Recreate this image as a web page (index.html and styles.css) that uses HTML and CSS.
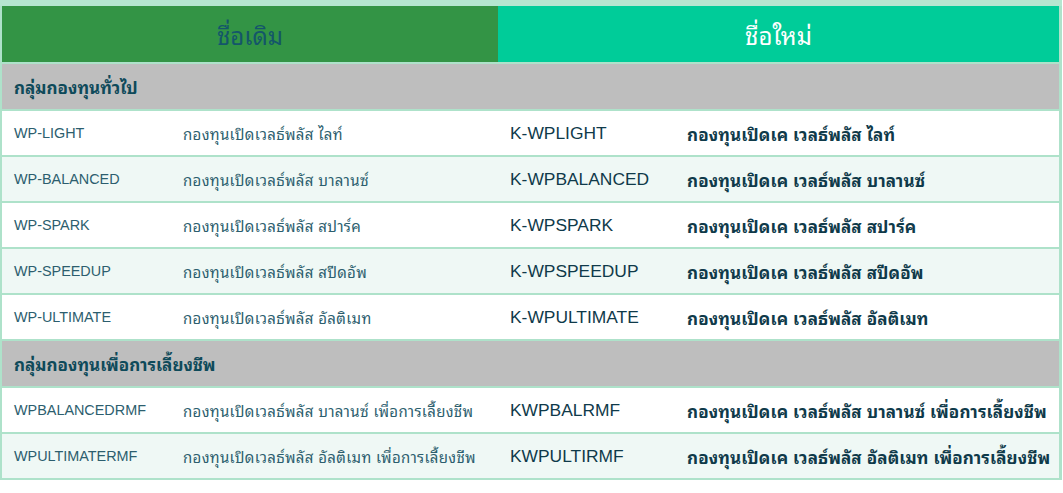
FILE: index.html
```html
<!DOCTYPE html>
<html lang="th">
<head>
<meta charset="utf-8">
<link rel="stylesheet" href="styles.css">
</head>
<body>
<div class="wrap">
<table class="funds">
  <colgroup>
    <col class="c1"><col class="c2"><col class="c3"><col class="c4">
  </colgroup>
  <thead>
    <tr>
      <th colspan="2" class="h-old">ชื่อเดิม</th>
      <th colspan="2" class="h-new">ชื่อใหม่</th>
    </tr>
  </thead>
  <tbody>
    <tr class="group"><td colspan="4">กลุ่มกองทุนทั่วไป</td></tr>
    <tr class="odd"><td class="oc">WP-LIGHT</td><td class="on">กองทุนเปิดเวลธ์พลัส ไลท์</td><td class="nc">K-WPLIGHT</td><td class="nn">กองทุนเปิดเค เวลธ์พลัส ไลท์</td></tr>
    <tr class="even"><td class="oc">WP-BALANCED</td><td class="on">กองทุนเปิดเวลธ์พลัส บาลานซ์</td><td class="nc">K-WPBALANCED</td><td class="nn">กองทุนเปิดเค เวลธ์พลัส บาลานซ์</td></tr>
    <tr class="odd"><td class="oc">WP-SPARK</td><td class="on">กองทุนเปิดเวลธ์พลัส สปาร์ค</td><td class="nc">K-WPSPARK</td><td class="nn">กองทุนเปิดเค เวลธ์พลัส สปาร์ค</td></tr>
    <tr class="even"><td class="oc">WP-SPEEDUP</td><td class="on">กองทุนเปิดเวลธ์พลัส สปีดอัพ</td><td class="nc">K-WPSPEEDUP</td><td class="nn">กองทุนเปิดเค เวลธ์พลัส สปีดอัพ</td></tr>
    <tr class="odd"><td class="oc">WP-ULTIMATE</td><td class="on">กองทุนเปิดเวลธ์พลัส อัลติเมท</td><td class="nc">K-WPULTIMATE</td><td class="nn">กองทุนเปิดเค เวลธ์พลัส อัลติเมท</td></tr>
    <tr class="group"><td colspan="4">กลุ่มกองทุนเพื่อการเลี้ยงชีพ</td></tr>
    <tr class="odd"><td class="oc">WPBALANCEDRMF</td><td class="on">กองทุนเปิดเวลธ์พลัส บาลานซ์ เพื่อการเลี้ยงชีพ</td><td class="nc">KWPBALRMF</td><td class="nn">กองทุนเปิดเค เวลธ์พลัส บาลานซ์ เพื่อการเลี้ยงชีพ</td></tr>
    <tr class="even"><td class="oc">WPULTIMATERMF</td><td class="on">กองทุนเปิดเวลธ์พลัส อัลติเมท เพื่อการเลี้ยงชีพ</td><td class="nc">KWPULTIRMF</td><td class="nn">กองทุนเปิดเค เวลธ์พลัส อัลติเมท เพื่อการเลี้ยงชีพ</td></tr>
  </tbody>
</table>
</div>
</body>
</html>
```

FILE: styles.css
```css
html, body {
  margin: 0;
  padding: 0;
  background: #ffffff;
}
body {
  font-family: "Liberation Sans", "Noto Sans Thai Looped", "Noto Sans Thai", "Noto Sans", Tahoma, sans-serif;
}
.wrap {
  width: 1063px;
}
.funds {
  width: 1062px;
  border-collapse: collapse;
  table-layout: fixed;
  border-top: 6px solid #b5e6d0;
  border-left: 2px solid #aee2ca;
  border-right: 3px solid #aee2ca;
}
.c1 { width: 169px; }
.c2 { width: 328px; }
.c3 { width: 178px; }
.c4 { width: auto; }
th {
  height: 56px;
  padding: 0;
  font-size: 24px;
  font-weight: normal;
  text-align: center;
  border-bottom: 2px solid #aee2ca;
}
.h-old { background: #339445; color: #14566a; }
.h-new { background: #00cc99; color: #ffffff; }
td {
  height: 44px;
  padding: 0 0 0 12px;
  border-bottom: 2px solid #aee2ca;
  white-space: nowrap;
  overflow: visible;
  vertical-align: middle;
}
.group td {
  background: #bebebe;
  color: #0e4a5a;
  font-weight: bold;
  font-size: 17px;
  height: 45px;
}
.odd td { background: #ffffff; }
.even td { background: #eff8f5; }
.oc {
  font-size: 14.4px;
  color: #2c5e6e;
}
.on {
  font-size: 15px;
  letter-spacing: 0.33px;
  color: #2c5e6e;
  padding-left: 13px;
}
.nc {
  font-size: 17.4px;
  color: #0f3a4a;
}
.nn {
  font-size: 17px;
  letter-spacing: 0.12px;
  font-weight: bold;
  color: #0f3a4a;
  padding-left: 11px;
}
```
